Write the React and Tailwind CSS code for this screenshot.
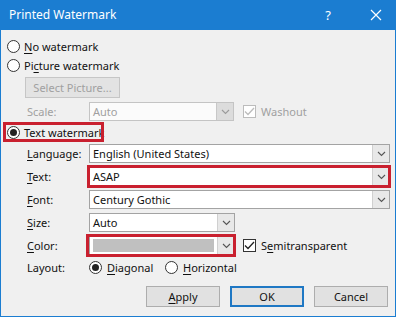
import React from "react";

const font = { fontFamily: '"Noto Sans", "Open Sans", sans-serif' };

function Chevron({ color = "#555" }) {
  return (
    <svg width="9" height="6" viewBox="0 0 9 6">
      <path d="M1 1 L4.5 4.5 L8 1" fill="none" stroke={color} strokeWidth="1.1" />
    </svg>
  );
}

function Combo({ value, width, disabled = false, swatch = false }) {
  return (
    <div
      className={`flex h-[19px] border ${disabled ? "border-[#c4c4c4]" : "border-[#a3a3a3]"} ${width}`}
    >
      <div className={`flex-1 flex items-center pl-[3px] whitespace-nowrap ${disabled ? "bg-[#fbfbfb] text-[#a0a0a0]" : "bg-white text-[#111]"}`}>
        {swatch ? <div className="h-[13px] flex-1 mr-[3px] bg-[#c0c0c0]" /> : value}
      </div>
      <div className={`w-[17px] flex items-center justify-center border-l ${disabled ? "bg-[#dcdcdc] border-[#c8c8c8]" : "bg-[#e8e8e8] border-[#d0d0d0]"}`}>
        <Chevron color={disabled ? "#9a9a9a" : "#555"} />
      </div>
    </div>
  );
}

function Radio({ checked }) {
  return (
    <div className="w-[13px] h-[13px] rounded-full border border-[#333] bg-white flex items-center justify-center shrink-0">
      {checked && <div className="w-[7px] h-[7px] rounded-full bg-[#222]" />}
    </div>
  );
}

function Check({ disabled }) {
  return (
    <div className={`w-[13px] h-[13px] border bg-white flex items-center justify-center shrink-0 ${disabled ? "border-[#bcbcbc]" : "border-[#333]"}`}>
      <svg width="11" height="9" viewBox="0 0 11 9">
        <path d="M1 4.5 L4 7.5 L10 1" fill="none" stroke={disabled ? "#bcbcbc" : "#222"} strokeWidth="1.3" />
      </svg>
    </div>
  );
}

function U({ children }) {
  return <span className="underline underline-offset-[2px] decoration-[1px]">{children}</span>;
}

function Label({ children, disabled }) {
  return <div className={`w-[62px] pl-[26px] box-content shrink-0 whitespace-nowrap ${disabled ? "text-[#a0a0a0]" : "text-[#111]"}`}>{children}</div>;
}

export default function App() {
  return (
    <div style={font} className="w-[396px] h-[317px] flex flex-col bg-[#1b7dd1] text-[11px] leading-none text-[#111]">
      {/* title */}
      <div className="h-[30px] flex items-center text-white shrink-0">
        <div className="pl-[9px] flex-1 text-[12px]">Printed Watermark</div>
        <div className="w-[24px] text-center text-[13px] mr-[30px]">?</div>
        <svg width="12" height="12" viewBox="0 0 12 12" className="mr-[14px]">
          <path d="M1 1 L11 11 M11 1 L1 11" stroke="#ffffff" strokeWidth="1.2" />
        </svg>
      </div>
      {/* body */}
      <div className="flex-1 mx-[1px] mb-[1px] bg-[#f0f0f0] flex flex-col pt-[6px] whitespace-nowrap">
        <div className="h-[20px] flex items-center pl-[6px] gap-[4px]">
          <Radio /> <span><U>N</U>o watermark</span>
        </div>
        <div className="h-[19px] flex items-center pl-[6px] gap-[4px]">
          <Radio /> <span>Pi<U>c</U>ture watermark</span>
        </div>
        <div className="mt-[2px] ml-[24px] w-[95px] h-[21px] border border-[#c6c6c6] bg-[#e3e3e3] text-[#a0a0a0] flex items-center justify-center">
          Select Picture...
        </div>
        <div className="mt-[4px] flex items-center">
          <Label disabled>Scale:</Label>
          <Combo value="Auto" width="w-[145px]" disabled />
          <div className="ml-[9px] flex items-center gap-[5px] text-[#a0a0a0]">
            <Check disabled /> Washout
          </div>
        </div>
        <div className="mt-[1px] h-[20px] flex items-center">
          <div className="relative h-[20px] ml-[2px] w-[101px] flex items-center pl-[4px] gap-[4px]">
            <Radio checked /> <span>Te<U>x</U>t watermark</span>
            <div className="absolute inset-0 border-[3px] border-[#c9202f]" />
          </div>
        </div>
        <div className="mt-[2px] flex items-center">
          <Label><U>L</U>anguage:</Label>
          <Combo value="English (United States)" width="w-[301px]" />
        </div>
        <div className="mt-[4px] flex items-center">
          <Label><U>T</U>ext:</Label>
          <div className="relative">
            <Combo value="ASAP" width="w-[301px]" />
            <div className="absolute -top-[2px] -bottom-[2px] -left-[2px] -right-[1px] border-[3px] border-[#c9202f]" />
          </div>
        </div>
        <div className="mt-[4px] flex items-center">
          <Label><U>F</U>ont:</Label>
          <Combo value="Century Gothic" width="w-[301px]" />
        </div>
        <div className="mt-[4px] flex items-center">
          <Label><U>S</U>ize:</Label>
          <Combo value="Auto" width="w-[146px]" />
        </div>
        <div className="mt-[4px] flex items-center">
          <Label><U>C</U>olor:</Label>
          <div className="relative">
            <Combo swatch width="w-[146px]" />
            <div className="absolute -top-[2px] -bottom-[2px] -left-[3px] -right-[1px] border-[3px] border-[#c9202f]" />
          </div>
          <div className="ml-[8px] flex items-center gap-[5px]">
            <Check /> <span>S<U>e</U>mitransparent</span>
          </div>
        </div>
        <div className="mt-[3px] h-[19px] flex items-center">
          <Label>Layout:</Label>
          <div className="w-[76px] flex items-center gap-[5px]">
            <Radio checked /> <span><U>D</U>iagonal</span>
          </div>
          <div className="flex items-center gap-[5px]">
            <Radio /> <span><U>H</U>orizontal</span>
          </div>
        </div>
        <div className="mt-[9px] flex justify-end pr-[7px] gap-[10px]">
          <div className="w-[74px] h-[21px] border border-[#adadad] bg-[#e1e1e1] flex items-center justify-center">
            <U>A</U>pply
          </div>
          <div className="w-[74px] h-[21px] border-2 border-[#1f78c4] bg-[#e1e1e1] flex items-center justify-center">
            OK
          </div>
          <div className="w-[74px] h-[21px] border border-[#adadad] bg-[#e1e1e1] flex items-center justify-center">
            Cancel
          </div>
        </div>
      </div>
    </div>
  );
}
